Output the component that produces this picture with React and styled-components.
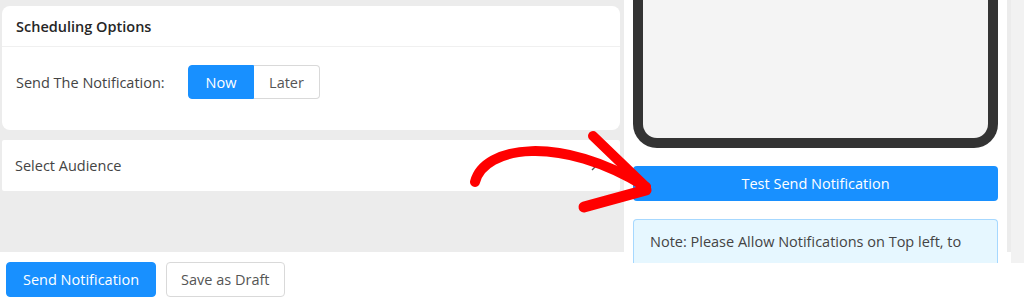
import React from 'react'
import styled, { createGlobalStyle } from 'styled-components'

const GlobalStyle = createGlobalStyle`
    html, body {
        margin: 0;
        padding: 0;
        width: 1024px;
        height: 305px;
        overflow: hidden;
        background: #ececec;
        font-family: "Open Sans", "Noto Sans", sans-serif;
        font-size: 14.5px;
        color: #333;
    }
    * { box-sizing: border-box; }
`;

const Page = styled.div`
    position: relative;
    width: 1024px;
    height: 305px;
    overflow: hidden;
`;

const Main = styled.div`
    display: grid;
    grid-template-columns: 620px 383px 1fr;
    column-gap: 4px;
    height: 252px;
`;

const LeftCol = styled.div`
    display: flex;
    flex-direction: column;
    gap: 10px;
    padding: 6px 0 0 2px;
`;

const Card = styled.div`
    background: #fff;
    border-radius: ${p => p.$radius || 0}px;
    height: ${p => p.$height}px;
    display: flex;
    flex-direction: column;
`;

const CardHeader = styled.div`
    height: 41px;
    display: flex;
    align-items: center;
    padding: 0 14px;
    font-weight: 600;
    color: #262626;
    border-bottom: 1px solid #f0f0f0;
`;

const CardBody = styled.div`
    padding: 18px 14px;
    display: flex;
    align-items: center;
`;

const Label = styled.span`
    color: #444;
    width: 172px;
`;

const Segmented = styled.div`
    display: flex;
    height: 34px;
`;

const SegButton = styled.button`
    width: 66px;
    height: 34px;
    font: inherit;
    border: 1px solid ${p => (p.$active ? '#1890ff' : '#d9d9d9')};
    background: ${p => (p.$active ? '#1890ff' : '#fff')};
    color: ${p => (p.$active ? '#fff' : '#555')};
    border-radius: ${p => (p.$first ? '4px 0 0 4px' : '0 4px 4px 0')};
    border-left-width: ${p => (p.$first ? '1px' : '0')};
    padding: 0;
`;

const AudienceRow = styled.div`
    flex: 1;
    display: flex;
    align-items: center;
    justify-content: space-between;
    padding: 0 22px 0 13px;
    color: #444;
`;

const RightPanel = styled.div`
    background: #fff;
    padding: 0 9px;
    display: flex;
    flex-direction: column;
    gap: 18px;
`;

const Phone = styled.div`
    height: 148px;
    background: #f4f4f4;
    border: 10px solid #333;
    border-top: none;
    border-radius: 0 0 24px 24px;
    flex-shrink: 0;
`;

const TestButton = styled.button`
    height: 35px;
    flex-shrink: 0;
    border: none;
    border-radius: 4px;
    background: #1890ff;
    color: #fff;
    font: inherit;
`;

const Note = styled.div`
    flex: 1;
    background: #e6f7ff;
    border: 1px solid #a6d8ff;
    border-bottom: none;
    border-radius: 4px 4px 0 0;
    padding: 12px 16px;
    color: #444;
`;

const Strip = styled.div`
    background: #f2f2f2;
`;

const Footer = styled.div`
    background: #fff;
    height: 53px;
    display: flex;
    align-items: flex-start;
    gap: 10px;
    padding: 10px 6px 0;
`;

const FooterButton = styled.button`
    height: 35px;
    padding: 0 ${p => (p.$primary ? 16 : 14)}px;
    font: inherit;
    border-radius: 4px;
    border: 1px solid ${p => (p.$primary ? '#1890ff' : '#d9d9d9')};
    background: ${p => (p.$primary ? '#1890ff' : '#fff')};
    color: ${p => (p.$primary ? '#fff' : '#555')};
`;

const Overlay = styled.svg`
    position: absolute;
    left: 0;
    top: 0;
    pointer-events: none;
`;

const Chevron = () => (
    <svg width="8" height="12" viewBox="0 0 8 12">
        <path d="M2 2l4 4-4 4" fill="none" stroke="#555" strokeWidth="1.4" />
    </svg>
);

const RedArrow = () => (
    <Overlay width="1024" height="305" viewBox="0 0 1024 305">
        <g fill="none" stroke="#f00" strokeLinecap="round" strokeLinejoin="round">
            <path d="M475 182 C484 146, 560 134, 646 187" strokeWidth="10" />
            <path d="M593 136 L646 187" strokeWidth="10" />
            <path d="M584 207 L646 190" strokeWidth="11" />
        </g>
    </Overlay>
);

export default function App() {
    return (
        <Page>
            <GlobalStyle />
            <Main>
                <LeftCol>
                    <Card $height={124} $radius={8}>
                        <CardHeader>Scheduling Options</CardHeader>
                        <CardBody>
                            <Label>Send The Notification:</Label>
                            <Segmented>
                                <SegButton $active $first>Now</SegButton>
                                <SegButton>Later</SegButton>
                            </Segmented>
                        </CardBody>
                    </Card>
                    <Card $height={51} $radius={2}>
                        <AudienceRow>
                            Select Audience
                            <Chevron />
                        </AudienceRow>
                    </Card>
                </LeftCol>
                <RightPanel>
                    <Phone />
                    <TestButton>Test Send Notification</TestButton>
                    <Note>Note: Please Allow Notifications on Top left, to</Note>
                </RightPanel>
                <Strip />
            </Main>
            <Footer>
                <FooterButton $primary>Send Notification</FooterButton>
                <FooterButton>Save as Draft</FooterButton>
            </Footer>
            <RedArrow />
        </Page>
    )
}
